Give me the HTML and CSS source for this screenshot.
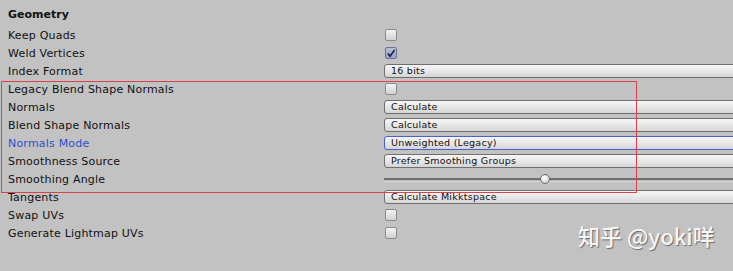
FILE: index.html
```html
<!DOCTYPE html>
<html>
<head>
<meta charset="utf-8">
<link rel="stylesheet" href="styles.css">
</head>
<body>
<div class="inspector">
  <div class="header">Geometry</div>
  <div class="rows">
    <div class="row"><div class="label">Keep Quads</div><div class="ctrl"><span class="check"></span></div></div>
    <div class="row"><div class="label">Weld Vertices</div><div class="ctrl"><span class="check on"><svg viewBox="0 0 11 11" width="11" height="11"><path d="M2 5.5 L4.5 8.5 L9.5 1.5" fill="none" stroke="#10204a" stroke-width="1.8"/></svg></span></div></div>
    <div class="row"><div class="label">Index Format</div><div class="ctrl"><div class="drop">16 bits</div></div></div>
    <div class="row"><div class="label">Legacy Blend Shape Normals</div><div class="ctrl"><span class="check"></span></div></div>
    <div class="row"><div class="label">Normals</div><div class="ctrl"><div class="drop">Calculate</div></div></div>
    <div class="row"><div class="label">Blend Shape Normals</div><div class="ctrl"><div class="drop">Calculate</div></div></div>
    <div class="row"><div class="label blue">Normals Mode</div><div class="ctrl"><div class="drop focus">Unweighted (Legacy)</div></div></div>
    <div class="row"><div class="label">Smoothness Source</div><div class="ctrl"><div class="drop">Prefer Smoothing Groups</div></div></div>
    <div class="row"><div class="label">Smoothing Angle</div><div class="ctrl"><div class="slider"><span class="thumb"></span></div></div></div>
    <div class="row"><div class="label">Tangents</div><div class="ctrl"><div class="drop">Calculate Mikktspace</div></div></div>
    <div class="row"><div class="label">Swap UVs</div><div class="ctrl"><span class="check"></span></div></div>
    <div class="row"><div class="label">Generate Lightmap UVs</div><div class="ctrl"><span class="check"></span></div></div>
  </div>
  <div class="highlight"></div>
  <div class="watermark">知乎 @yoki咩</div>
</div>
</body>
</html>
```
FILE: styles.css
```css
html, body {
  margin: 0;
  padding: 0;
  background: #c2c2c2;
  overflow: hidden;
}
.inspector {
  position: relative;
  width: 733px;
  height: 271px;
  padding-top: 6px;
  box-sizing: border-box;
  font-family: "DejaVu Sans", Verdana, sans-serif;
  font-size: 11px;
  color: #111;
  overflow: hidden;
}
.header {
  height: 18px;
  line-height: 18px;
  padding-left: 8px;
  font-weight: bold;
  margin-bottom: 2px;
}
.rows {
  display: flex;
  flex-direction: column;
}
.row {
  display: flex;
  height: 18px;
  align-items: center;
}
.label {
  flex: none;
  width: 376px;
  padding-left: 8px;
  white-space: nowrap;
  letter-spacing: 0.2px;
}
.label.blue { color: #2f4fc9; }
.ctrl {
  flex: none;
  width: 500px;
  display: flex;
  align-items: center;
}
.check {
  width: 12px;
  height: 12px;
  margin-left: 1px;
  border: 1px solid #8a8a8a;
  border-radius: 2px;
  background: linear-gradient(#f4f4f4, #d2d2d2);
  box-sizing: border-box;
  display: flex;
  align-items: center;
  justify-content: center;
}
.check.on {
  background: linear-gradient(#b5bdd8, #97a2c4);
  border-color: #6b7396;
}
.check svg { display: block; }
.drop {
  width: 480px;
  height: 14px;
  box-sizing: border-box;
  border: 1px solid #6f6f6f;
  border-radius: 3px;
  background: linear-gradient(#f6f6f6, #e4e4e4 60%, #d4d4d4);
  font-size: 9.5px;
  line-height: 12px;
  padding-left: 6px;
  letter-spacing: 0.25px;
  white-space: nowrap;
  color: #111;
}
.drop.focus {
  border-color: #4a5fd0;
}
.slider {
  position: relative;
  width: 480px;
  height: 4px;
  margin-top: 1px;
  border-top: 2px solid #707070;
  background: #b6b6b6;
  box-sizing: border-box;
  border-bottom: 1px solid #dadada;
}
.thumb {
  position: absolute;
  left: 156px;
  top: -6px;
  width: 10px;
  height: 10px;
  border-radius: 50%;
  border: 1px solid #6a6a6a;
  background: radial-gradient(circle at 40% 35%, #ffffff, #d8d8d8 70%);
  box-sizing: border-box;
}
.highlight {
  position: absolute;
  left: 1px;
  top: 81px;
  width: 636px;
  height: 112px;
  border: 1px solid #d8434b;
  box-sizing: border-box;
  pointer-events: none;
}
.watermark {
  position: absolute;
  left: 578px;
  top: 222px;
  font-family: "Noto Sans CJK SC", "DejaVu Sans", sans-serif;
  font-size: 22px;
  font-weight: 500;
  line-height: 26px;
  color: #f6f6f6;
  text-shadow: 1px 1px 1px #6a6a6a;
  white-space: nowrap;
}
```
